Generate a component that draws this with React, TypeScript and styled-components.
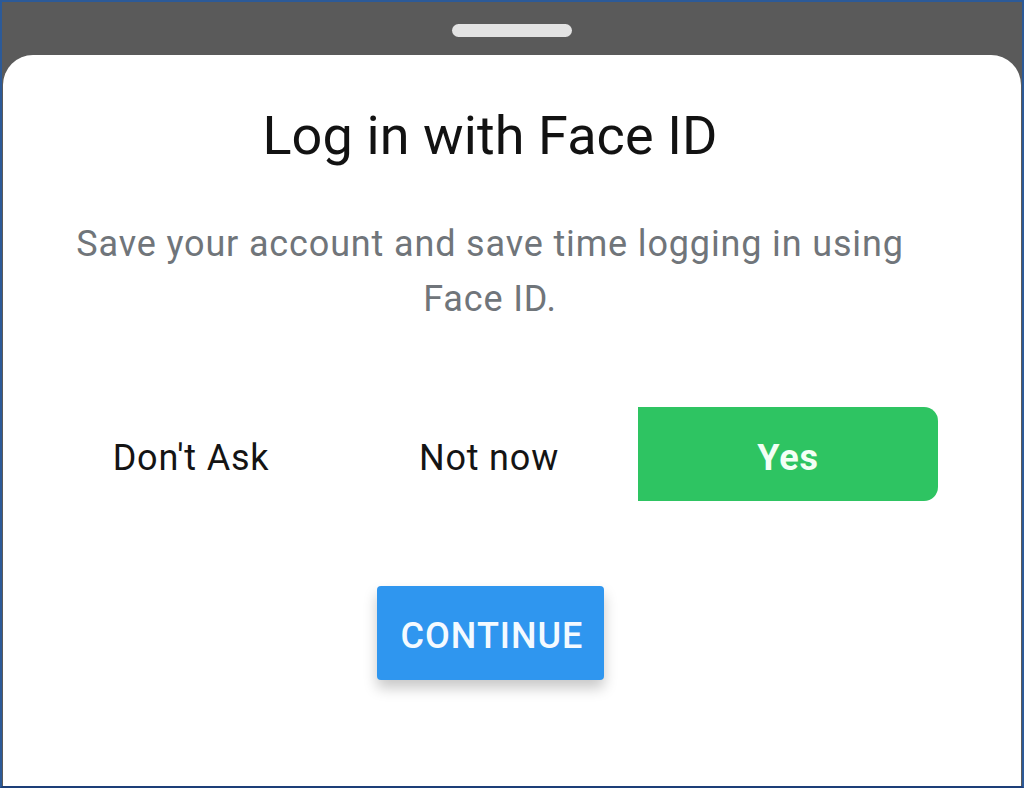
import styled, { createGlobalStyle } from "styled-components";

const GlobalStyle = createGlobalStyle`
  * {
    box-sizing: border-box;
  }
  body {
    margin: 0;
    font-family: Roboto, "Liberation Sans", Arial, sans-serif;
    background: #ffffff;
  }
`;

// 3 option buttons of the sheet
const options = [
  { label: "Don't Ask", primary: false },
  { label: "Not now", primary: false },
  { label: "Yes", primary: true },
];

function App() {
  return (
    <>
      <GlobalStyle />
      <Frame>
        <TopBar>
          <Handle />
        </TopBar>
        <Sheet>
          <Content>
            <Title>Log in with Face ID</Title>
            <Subtitle>
              Save your account and save time logging in using
              <br />
              Face ID.
            </Subtitle>
            <OptionRow>
              {options.map((o) => (
                <Option key={o.label} $primary={o.primary}>
                  {o.label}
                </Option>
              ))}
            </OptionRow>
            <ContinueWrap>
              <ContinueButton>CONTINUE</ContinueButton>
            </ContinueWrap>
          </Content>
        </Sheet>
      </Frame>
    </>
  );
}

const Frame = styled.div`
  width: 1024px;
  height: 788px;
  border: 2px solid #2c5a98;
  border-bottom-color: #1d3f78;
  background: #5a5a5a;
  display: flex;
  flex-direction: column;
  overflow: hidden;
`;

const TopBar = styled.div`
  height: 53px;
  display: flex;
  justify-content: center;
  padding-top: 22px;
  flex-shrink: 0;
`;

const Handle = styled.div`
  width: 120px;
  height: 13px;
  border-radius: 7px;
  background: #e3e3e3;
`;

const Sheet = styled.div`
  flex: 1;
  background: #ffffff;
  border-radius: 30px 30px 0 0;
  margin: 0 1px 0 1px;
  padding: 50px 0 0 39px;
`;

const Content = styled.div`
  width: 896px;
  display: flex;
  flex-direction: column;
  align-items: center;
`;

const Title = styled.h1`
  margin: 0;
  font-size: 54px;
  font-weight: 400;
  line-height: 62px;
  color: #121212;
  letter-spacing: 0.1px;
`;

const Subtitle = styled.p`
  margin: 50px 0 0;
  font-size: 36px;
  line-height: 55px;
  letter-spacing: 0.85px;
  color: #70757a;
  text-align: center;
`;

const OptionRow = styled.div`
  margin-top: 80px;
  width: 100%;
  display: grid;
  grid-template-columns: 298px 298px 300px;
`;

const Option = styled.div<{ $primary: boolean }>`
  height: 94px;
  display: flex;
  align-items: center;
  justify-content: center;
  padding-top: 7px;
  font-size: 36px;
  letter-spacing: 0.8px;
  font-weight: ${(p) => (p.$primary ? 700 : 400)};
  color: ${(p) => (p.$primary ? "#f2fff5" : "#141414")};
  background: ${(p) => (p.$primary ? "#2ec462" : "transparent")};
  border-radius: ${(p) => (p.$primary ? "0 14px 14px 0" : "0")};
`;

const ContinueWrap = styled.div`
  margin-top: 85px;
  display: flex;
  justify-content: center;
`;

const ContinueButton = styled.button`
  height: 94px;
  width: 227px;
  padding: 5px 0 0 4px;
  border: 0;
  border-radius: 4px;
  background: #2f96ef;
  color: #f4faff;
  font-family: Roboto, "Liberation Sans", Arial, sans-serif;
  font-size: 36px;
  font-weight: 500;
  letter-spacing: 1px;
  box-shadow: 0 8px 14px rgba(0, 0, 0, 0.22);
  cursor: pointer;
`;

export default App;
